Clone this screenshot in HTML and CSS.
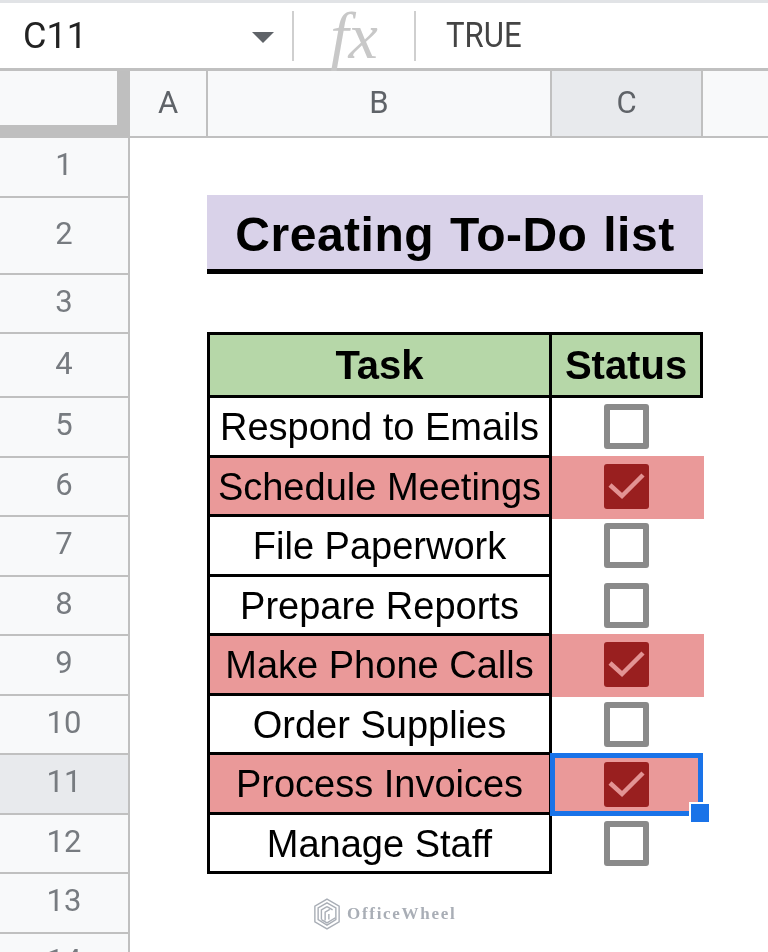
FILE: index.html
```html
<!DOCTYPE html>
<html lang="en">

<head>
    <meta charset="UTF-8">
    <meta name="viewport" content="width=device-width, initial-scale=1.0">
    <title>Creating To-Do list</title>
    <link rel="stylesheet" href="styles.css">
</head>

<body>
    <div class="formula-bar">
        <div class="name-box">
            <span class="cell-name">C11</span>
            <span class="arrow"></span>
        </div>
        <div class="divider"></div>
        <div class="fx">
            <span class="fx-text">fx</span>
        </div>
        <div class="divider"></div>
        <div class="formula-value">TRUE</div>
    </div>

    <div class="col-headers">
        <div class="corner"><div class="corner-inner"></div></div>
        <div class="col-head col-a">A</div>
        <div class="col-head col-b">B</div>
        <div class="col-head col-c">C</div>
        <div class="col-head col-d"></div>
    </div>

    <div class="sheet">
        <div class="row-headers">
            <div class="row-head h58">1</div>
            <div class="row-head h75">2</div>
            <div class="row-head h58">3</div>
            <div class="row-head h63">4</div>
            <div class="row-head h58">5</div>
            <div class="row-head h58">6</div>
            <div class="row-head h58">7</div>
            <div class="row-head h58">8</div>
            <div class="row-head h58">9</div>
            <div class="row-head h58">10</div>
            <div class="row-head h58 active">11</div>
            <div class="row-head h58">12</div>
            <div class="row-head h58">13</div>
            <div class="row-head h58">14</div>
        </div>

        <div class="canvas">
            <div class="title">Creating To-Do list</div>

            <div class="todo">
                <div class="cell head-cell">Task</div>
                <div class="cell head-cell status">Status</div>

                <div class="cell">Respond to Emails</div>
                <div class="check-cell"><span class="box"></span></div>

                <div class="cell done">Schedule Meetings</div>
                <div class="check-cell done-wide"><span class="box on"><svg viewBox="0 0 45 45"><path d="M6 21l12 11L39 11"/></svg></span></div>

                <div class="cell">File Paperwork</div>
                <div class="check-cell"><span class="box"></span></div>

                <div class="cell">Prepare Reports</div>
                <div class="check-cell"><span class="box"></span></div>

                <div class="cell done">Make Phone Calls</div>
                <div class="check-cell done-wide"><span class="box on"><svg viewBox="0 0 45 45"><path d="M6 21l12 11L39 11"/></svg></span></div>

                <div class="cell">Order Supplies</div>
                <div class="check-cell"><span class="box"></span></div>

                <div class="cell done">Process Invoices</div>
                <div class="check-cell done-wide selected">
                    <span class="box on"><svg viewBox="0 0 45 45"><path d="M6 21l12 11L39 11"/></svg></span>
                    <span class="handle"></span>
                </div>

                <div class="cell">Manage Staff</div>
                <div class="check-cell"><span class="box"></span></div>
            </div>

            <div class="watermark">
                <svg class="wm-logo" viewBox="0 0 30 36">
                    <path d="M15 2L28 9.500V26.500L15 34L2 26.500V9.500z"/>
                    <path d="M15 6L24.500 11.500V24L15 30L5.500 24V11.500z"/>
                    <path d="M15 10L21 13.500M9 24V13.500L15 10M9 24l6 3.500L24 22M13 25V16l5-3M17 24V18"/>
                </svg>
                <span class="wm-text">OfficeWheel</span>
            </div>
        </div>
    </div>
</body>

</html>
```

FILE: styles.css
```css
html,
body {
    margin: 0;
    padding: 0;
}

body {
    width: 768px;
    height: 952px;
    overflow: hidden;
    background-color: #fff;
    font-family: 'Liberation Sans', Arial, sans-serif;
    color: #000;
    filter: blur(0.45px);
}

/* formula bar */
.formula-bar {
    display: flex;
    align-items: center;
    height: 65px;
    border-top: 3px solid #e1e3e6;
    border-bottom: 3px solid #c0c0c0;
}

.name-box {
    display: flex;
    align-items: center;
    justify-content: space-between;
    width: 292px;
    padding: 0 18px 0 23px;
    box-sizing: border-box;
}

.cell-name {
    font-family: 'Roboto', sans-serif;
    font-size: 36px;
    color: #222;
}

.arrow {
    width: 0;
    height: 0;
    margin-top: 3px;
    border-left: 11px solid transparent;
    border-right: 11px solid transparent;
    border-top: 11px solid #5f6368;
}

.divider {
    flex: none;
    width: 2px;
    height: 50px;
    background-color: #cfcfcf;
}

.fx {
    display: flex;
    align-items: center;
    justify-content: center;
    width: 120px;
}

.fx-text {
    font-family: 'Liberation Serif', serif;
    font-style: italic;
    font-size: 66px;
    line-height: 60px;
    color: #c8c8c8;
}

.formula-value {
    margin-left: 30px;
    font-family: 'Roboto', sans-serif;
    font-size: 35px;
    color: #444;
    transform: scaleX(0.89);
    transform-origin: left center;
}

/* column headers */
.col-headers {
    display: flex;
    height: 67px;
}

.corner {
    width: 130px;
    height: 67px;
    background-color: #bfbfbf;
}

.corner-inner {
    width: 117px;
    height: 54px;
    background-color: #f8f9fa;
}

.col-head {
    display: flex;
    align-items: center;
    justify-content: center;
    box-sizing: border-box;
    height: 67px;
    padding-bottom: 3px;
    background-color: #f8f9fa;
    border-right: 2px solid #c0c0c0;
    border-bottom: 2px solid #c0c0c0;
    font-family: 'Roboto', sans-serif;
    font-size: 31px;
    color: #5f6368;
}

.col-a {
    width: 78px;
}

.col-b {
    width: 344px;
}

.col-c {
    width: 151px;
    background-color: #e8eaed;
}

.col-d {
    width: 65px;
    border-right: 0;
}

/* sheet */
.sheet {
    display: flex;
}

.row-headers {
    flex: none;
    width: 130px;
}

.row-head {
    display: flex;
    align-items: center;
    justify-content: center;
    box-sizing: border-box;
    padding-bottom: 4px;
    background-color: #f8f9fa;
    border-right: 2px solid #c0c0c0;
    border-bottom: 2px solid #c0c0c0;
    font-family: 'Roboto', sans-serif;
    font-size: 31px;
    color: #777b80;
}

.row-head.active {
    background-color: #e8eaed;
}

.h58 {
    height: 59.500px;
}

.h63 {
    height: 64px;
}

.h75 {
    height: 77px;
}

.canvas {
    flex: 1;
    padding: 57px 0 0 77px;
}

.title {
    width: 496px;
    height: 79px;
    box-sizing: border-box;
    background-color: #d9d2e9;
    border-bottom: 5px solid #000;
    text-align: center;
    font-weight: bold;
    font-size: 48px;
    line-height: 80px;
    letter-spacing: 0.500px;
    word-spacing: 2px;
}

.todo {
    display: grid;
    grid-template-columns: 345px 151px;
    margin-top: 58px;
    width: 496px;
}

.cell {
    display: flex;
    align-items: center;
    justify-content: center;
    height: 59.500px;
    padding-top: 3px;
    box-sizing: border-box;
    border: 3px solid #000;
    border-top: 0;
    background-color: #fff;
    font-size: 38px;
    white-space: nowrap;
}

.head-cell {
    height: 66px;
    padding-top: 0;
    border-top: 3px solid #000;
    background-color: #b6d7a8;
    font-weight: bold;
    font-size: 40px;
}

.status {
    border-left: 0;
}

.done {
    background-color: #ea9999;
}

.check-cell {
    position: relative;
    display: flex;
    align-items: center;
    justify-content: center;
    height: 59.500px;
    padding: 0 3px 2px 0;
    box-sizing: border-box;
}

.done-wide {
    background-color: #ea9999;
    margin: -2px -1px -2px 0;
    height: 63px;
}

.box {
    display: block;
    width: 45px;
    height: 45px;
    box-sizing: border-box;
    border: 6px solid #8a8a8a;
    border-radius: 3px;
    background-color: #fff;
}

.box.on {
    border: 0;
    background-color: #991f1f;
}

.box svg {
    display: block;
    width: 45px;
    height: 45px;
}

.box path {
    fill: none;
    stroke: #e39393;
    stroke-width: 4.500;
}

.selected {
    border: 5px solid #1a73e8;
    margin-left: -2px;
    margin-right: 0;
    padding: 0;
}

.handle {
    position: absolute;
    right: -11px;
    bottom: -11px;
    width: 18px;
    height: 18px;
    background-color: #1a73e8;
    box-shadow: 0 0 0 2px #fff;
}

/* watermark */
.watermark {
    display: flex;
    align-items: center;
    gap: 6px;
    margin: 23px 0 0 106px;
}

.wm-logo {
    width: 28px;
    height: 34px;
}

.wm-logo path {
    fill: none;
    stroke: #a9aeb6;
    stroke-width: 1.500;
}

.wm-text {
    font-family: 'Liberation Serif', serif;
    font-size: 17px;
    font-weight: bold;
    letter-spacing: 1.700px;
    color: #a9aeb6;
}
```
